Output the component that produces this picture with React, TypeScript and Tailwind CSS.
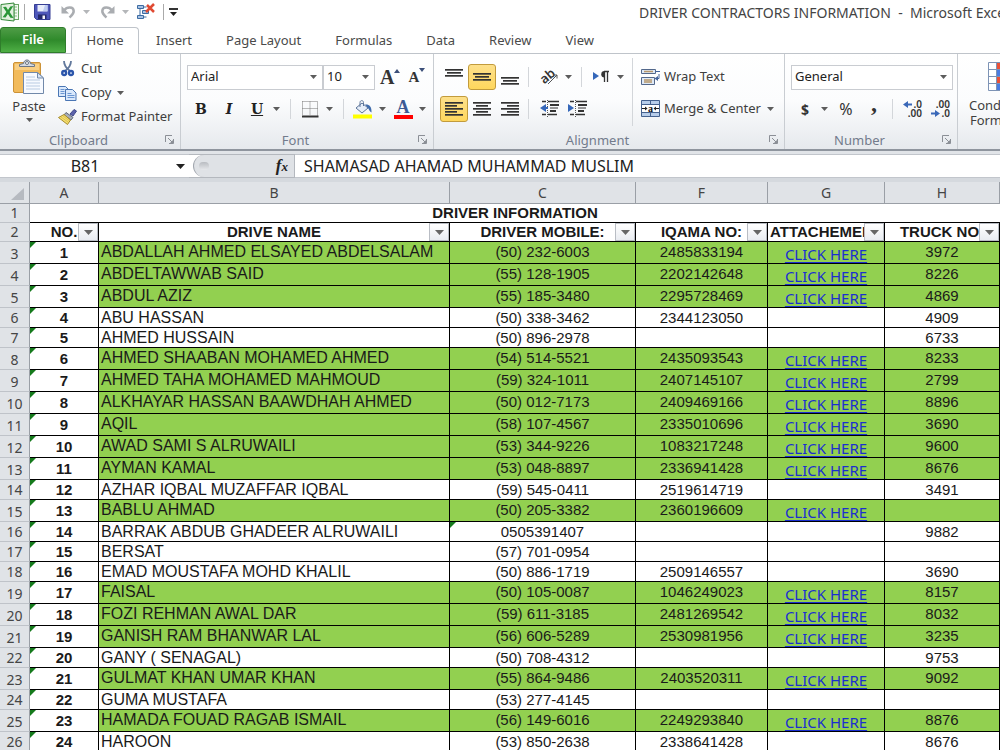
import type { ReactNode } from "react";

type Row = { name: string; mobile: string; iqama: string; truck: string; linked: boolean };

const rows: Row[] = [
  { name: "ABDALLAH AHMED ELSAYED ABDELSALAM", mobile: "(50) 232-6003", iqama: "2485833194", truck: "3972", linked: true },
  { name: "ABDELTAWWAB SAID", mobile: "(55) 128-1905", iqama: "2202142648", truck: "8226", linked: true },
  { name: "ABDUL AZIZ", mobile: "(55) 185-3480", iqama: "2295728469", truck: "4869", linked: true },
  { name: "ABU HASSAN", mobile: "(50) 338-3462", iqama: "2344123050", truck: "4909", linked: false },
  { name: "AHMED HUSSAIN", mobile: "(50) 896-2978", iqama: "", truck: "6733", linked: false },
  { name: "AHMED SHAABAN MOHAMED AHMED", mobile: "(54) 514-5521", iqama: "2435093543", truck: "8233", linked: true },
  { name: "AHMED TAHA MOHAMED MAHMOUD", mobile: "(59) 324-1011", iqama: "2407145107", truck: "2799", linked: true },
  { name: "ALKHAYAR HASSAN BAAWDHAH AHMED", mobile: "(50) 012-7173", iqama: "2409469166", truck: "8896", linked: true },
  { name: "AQIL", mobile: "(58) 107-4567", iqama: "2335010696", truck: "3690", linked: true },
  { name: "AWAD SAMI S ALRUWAILI", mobile: "(53) 344-9226", iqama: "1083217248", truck: "9600", linked: true },
  { name: "AYMAN KAMAL", mobile: "(53) 048-8897", iqama: "2336941428", truck: "8676", linked: true },
  { name: "AZHAR IQBAL MUZAFFAR IQBAL", mobile: "(59) 545-0411", iqama: "2519614719", truck: "3491", linked: false },
  { name: "BABLU AHMAD", mobile: "(50) 205-3382", iqama: "2360196609", truck: "", linked: true },
  { name: "BARRAK ABDUB GHADEER ALRUWAILI", mobile: "0505391407", iqama: "", truck: "9882", linked: false },
  { name: "BERSAT", mobile: "(57) 701-0954", iqama: "", truck: "", linked: false },
  { name: "EMAD MOUSTAFA MOHD KHALIL", mobile: "(50) 886-1719", iqama: "2509146557", truck: "3690", linked: false },
  { name: "FAISAL", mobile: "(50) 105-0087", iqama: "1046249023", truck: "8157", linked: true },
  { name: "FOZI REHMAN AWAL DAR", mobile: "(59) 611-3185", iqama: "2481269542", truck: "8032", linked: true },
  { name: "GANISH RAM BHANWAR LAL", mobile: "(56) 606-5289", iqama: "2530981956", truck: "3235", linked: true },
  { name: "GANY ( SENAGAL)", mobile: "(50) 708-4312", iqama: "", truck: "9753", linked: false },
  { name: "GULMAT KHAN UMAR KHAN", mobile: "(55) 864-9486", iqama: "2403520311", truck: "9092", linked: true },
  { name: "GUMA MUSTAFA", mobile: "(53) 277-4145", iqama: "", truck: "", linked: false },
  { name: "HAMADA FOUAD RAGAB ISMAIL", mobile: "(56) 149-6016", iqama: "2249293840", truck: "8876", linked: true },
  { name: "HAROON", mobile: "(53) 850-2638", iqama: "2338641428", truck: "8676", linked: false },
];

function Caret({ className = "text-[#5c5c5c]" }: { className?: string }) {
  return (
    <svg width="7" height="4" viewBox="0 0 7 4" className={`shrink-0 ${className}`} aria-hidden="true">
      <path d="M0 0h7L3.5 4z" fill="currentColor" />
    </svg>
  );
}

function CaretButton({ label }: { label: string }) {
  return (
    <button aria-label={label} className="flex h-[26px] w-[10px] items-center justify-center">
      <Caret />
    </button>
  );
}

function Tool({ label, active = false, children }: { label: string; active?: boolean; children: ReactNode }) {
  return (
    <button
      aria-label={label}
      className={
        active
          ? "flex h-[26px] w-7 shrink-0 items-center justify-center rounded-[3px] border border-[#c29b3c] bg-linear-to-b from-[#fde08a] to-[#ffd75c]"
          : "flex h-[26px] w-7 shrink-0 items-center justify-center"
      }
    >
      {children}
    </button>
  );
}

function Divider() {
  return <span className="h-5 w-px shrink-0 bg-[#d3d6da]" />;
}

function Group({ title, className, children }: { title: string; className: string; children: ReactNode }) {
  return (
    <section aria-label={title} className={`flex shrink-0 flex-col border-r border-[#c9cdd2] ${className}`}>
      <div className="flex-1">{children}</div>
      <div className="flex h-[19px] items-center pr-[6px] text-[13px] leading-[18px] text-[#737b8c]">
        <span className="flex-1 pr-2 text-center">{title}</span>
        <button aria-label={`${title} settings`}>
          <svg width="9" height="9" viewBox="0 0 9 9" fill="none" stroke="#8b8f96" aria-hidden="true">
            <path d="M.5 7V.5H7M3 3l4 4M8.500 4v4.500H4" />
            <path d="M8 5v3H5z" fill="#8b8f96" stroke="none" />
          </svg>
        </button>
      </div>
    </section>
  );
}

function Dropdown({ label, value, className }: { label: string; value: string; className: string }) {
  return (
    <div className={`relative shrink-0 ${className}`}>
      <select aria-label={label} defaultValue={value} className="h-[25px] w-full appearance-none border border-[#c9ccd1] bg-white pl-[3px] text-[13px] text-[#222]">
        <option>{value}</option>
      </select>
      <Caret className="pointer-events-none absolute top-[10px] right-[6px] text-[#5c5c5c]" />
    </div>
  );
}

function Lines({ y, spans }: { y: number; spans: [number, number][] }) {
  return (
    <svg width="18" height="20" viewBox="0 0 18 20" aria-hidden="true">
      {spans.map(([x, w], i) => (
        <rect key={i} x={x} y={y + i * 3} width={w} height="1.700" fill="#333" />
      ))}
    </svg>
  );
}

function ExcelLogo() {
  return (
    <svg width="20" height="20" viewBox="0 0 20 20" aria-hidden="true">
      <rect x="7" y="2.500" width="11.500" height="15" fill="#f4faf2" stroke="#6aa565" />
      <path d="M11 5h6M11 8h6M11 11h6M11 14h6M14 3v14" stroke="#8cba86" />
      <path d="M1 2.500 14 1v18L1 17.500z" fill="#e3f1df" stroke="#35893a" />
      <path d="m3 5 3-.3 2 3.300 2.300-3.600 3-.3-3.700 6 4 6-3.200-.3-2.500-3.800-2.300 3.500-3-.3 3.800-5.200z" fill="#2b9638" />
    </svg>
  );
}

function SaveIcon() {
  return (
    <svg width="17" height="16" viewBox="0 0 17 16" aria-hidden="true">
      <path d="M.5.5h15.500v15H2.500l-2-2z" fill="#4e57ba" stroke="#353d94" />
      <path d="M3.500 1h10v6.500h-10z" fill="#e8edfa" />
      <path d="M11 1h2.500v6H9z" fill="#bccaf0" />
      <path d="M4 10.500h8.500V15H4z" fill="#23296a" />
      <path d="M8.500 11.500h2.500V15H8.500z" fill="#f4f5fb" />
    </svg>
  );
}

function UndoIcon({ flip = false }: { flip?: boolean }) {
  return (
    <svg width="15" height="14" viewBox="0 0 15 14" fill="none" className={flip ? "-scale-x-100" : ""} aria-hidden="true">
      <path d="M3 5.500C6 1.500 12.500 1.500 12.700 6c.1 3-2 4.500-4.200 6.500" stroke="#aaadb1" strokeWidth="2.500" />
      <path d="M.5 1v7.500H8z" fill="#aaadb1" />
    </svg>
  );
}

function DeleteRowsIcon() {
  return (
    <svg width="20" height="18" viewBox="0 0 20 18" aria-hidden="true">
      <g fill="#a9c3e4" stroke="#3d6ca3">
        <path d="M1.500 2.500h6v3h-6zM6.500 7.500h6v3h-6zM1.500 12.500h6v3h-6z" />
      </g>
      <path d="M4 5.500v7M7.500 4h3M7.500 14h3" stroke="#3d6ca3" />
      <path d="m11 2 7 7m0-8-8 8" stroke="#e04a32" strokeWidth="2.500" />
    </svg>
  );
}

function PasteIcon() {
  return (
    <svg width="34" height="36" viewBox="0 0 34 36" aria-hidden="true">
      <rect x="1.500" y="3.500" width="27" height="30" rx="1.500" fill="#f2bb5c" stroke="#cc9237" />
      <path d="M3 5h24v6H3z" fill="#f8cf84" />
      <path d="M7.500 7.500V5.500l4-1C12-.2 18-.2 18.500 4.500l4 1v2z" fill="#d4dae2" stroke="#6c7684" />
      <circle cx="15" cy="4" r="1.500" fill="#fff" stroke="#6c7684" />
      <path d="M11.500 13.500h14l6 5.500v15.500h-20z" fill="#f7faff" stroke="#7189aa" />
      <path d="M25.500 13.500V19h6z" fill="#dae6f5" stroke="#7189aa" />
      <path d="M14 18h9M14 21h14M14 24h14M14 27h14M14 30h14" stroke="#b9cbe2" />
    </svg>
  );
}

function ScissorsIcon() {
  return (
    <svg width="14" height="16" viewBox="0 0 14 16" fill="none" aria-hidden="true">
      <path d="M3 0c0 4 2 7 6 10M10 0c0 4-2 7-6 10" stroke="#61789c" strokeWidth="1.800" />
      <circle cx="3.200" cy="12" r="2" stroke="#2b55ab" strokeWidth="2.300" />
      <circle cx="10" cy="12" r="2" stroke="#2b55ab" strokeWidth="2.300" />
    </svg>
  );
}

function CopyIcon() {
  return (
    <svg width="19" height="15" viewBox="0 0 19 15" aria-hidden="true">
      <g fill="#d9e8fb" stroke="#4a76b4">
        <path d="M.5.5h7l3 3v7H.5z" />
        <path d="M7.500 3.500h7l3.500 3.500v7.500H7.500z" />
      </g>
      <path d="M2.500 3.500h4M2.500 5.500h4M2.500 7.500h4M9.500 7.500h4M9.500 9.500h7M9.500 11.500h7" stroke="#6c97d2" />
    </svg>
  );
}

function PainterIcon() {
  return (
    <svg width="19" height="16" viewBox="0 0 19 16" aria-hidden="true">
      <path d="m12 5 4-4.500 2.500 1.500L15 7z" fill="#5b62ab" stroke="#3f4789" />
      <path d="m8 3.500 7 5-2 2.500-7-5z" fill="#a7adb9" stroke="#5f6879" />
      <path d="M6 5.500 .5 8.500l9 7 3-4.500z" fill="#f5df6e" stroke="#a58a2b" />
      <path d="m3 8 7 5M5 7l6 4.500" stroke="#dcc052" />
    </svg>
  );
}

function BordersIcon() {
  return (
    <svg width="17" height="17" viewBox="0 0 17 17" fill="none" aria-hidden="true">
      <path d="M.5.5h15v14M.5.5v14M8 .5v14M.5 7.500h15" stroke="#777" strokeDasharray="1 1" />
      <path d="M0 15.500h16.500" stroke="#333" strokeWidth="2" />
    </svg>
  );
}

function BucketIcon() {
  return (
    <svg width="20" height="19" viewBox="0 0 20 19" aria-hidden="true">
      <path d="m3 8 6-5 6 5-6 5z" fill="#e6eef9" stroke="#5d7599" />
      <path d="M7 7V2.500C7 0 10.500 0 10.500 2.500V6" fill="none" stroke="#5d7599" />
      <path d="M12 4.500c4-.5 7 2 6.500 8-1.500-.5-2.500-3-3.500-4.500z" fill="#416dac" />
      <path d="M0 14.500h19V18.500H0z" fill="#ffff00" />
    </svg>
  );
}

function OrientationIcon() {
  return (
    <svg width="19" height="18" viewBox="0 0 19 18" aria-hidden="true">
      <text x="0" y="13" transform="rotate(-40 7 9)" fontSize="13" fontWeight="600" fontFamily="Noto Sans, sans-serif" fill="#333">ab</text>
      <path d="m8 16 9-9M13.500 7H17v3.500" fill="none" stroke="#555" />
    </svg>
  );
}

function IndentIcon({ increase = false }: { increase?: boolean }) {
  return (
    <svg width="20" height="18" viewBox="0 0 20 18" aria-hidden="true">
      <path d="M2 1.500h4m2 0h11M2 14.500h4m2 0h9" stroke="#333" strokeWidth="1.500" />
      <path d="M10 5h9M10 11h6" stroke="#333" strokeWidth="2" />
      <path d="M10 8h8" stroke="#333" />
      <path d="M7.500 0v18" stroke="#555" strokeDasharray="1 1" />
      {increase ? <path d="M0 4v8l6-4z" fill="#3567b9" /> : <path d="M6 4v3h2v2H6v3L0 8z" fill="#3567b9" />}
    </svg>
  );
}

function WrapIcon() {
  return (
    <svg width="20" height="18" viewBox="0 0 20 18" fill="none" aria-hidden="true">
      <path d="M.5 1.500h14v4H.5zM.5 9.500h13v7H.5z" fill="#dfe9f6" stroke="#53688b" />
      <path d="M3 3.500h9M3 12h8M3 14h8" stroke="#b6966a" strokeWidth="1.500" />
      <path d="M14.500 3.500H19M18 6v4.500h-3" stroke="#43639c" />
      <path d="M17 8v5l-3.500-2.500z" fill="#43639c" />
    </svg>
  );
}

function MergeIcon() {
  return (
    <svg width="20" height="18" viewBox="0 0 20 18" fill="none" aria-hidden="true">
      <path d="M.5.5h18v16H.5z" fill="#b7cdea" stroke="#45628f" />
      <path d="M1 4.500h18M1 12.500h18M9.500 1v3M9.500 13v3" stroke="#45628f" />
      <path d="M1 5h17v7H1z" fill="#fff" />
      <path d="M1 8.500h5M13 8.500h5" stroke="#222" />
      <path d="M6.500 8.500 4 6.500v4zM12.500 8.500l2.500-2v4z" fill="#222" />
      <text x="7" y="12" fontSize="10" fontWeight="700" fontFamily="Liberation Serif, serif" fill="#111">a</text>
    </svg>
  );
}

function DecimalIcon({ decrease = false }: { decrease?: boolean }) {
  return (
    <svg width="20" height="18" viewBox="0 0 20 18" aria-hidden="true">
      <g fontSize="10" fontWeight="600" fontFamily="Noto Sans, sans-serif" fill="#333" textAnchor="end">
        <text x="19" y="8">{decrease ? ".00" : ".0"}</text>
        <text x="19" y="17">{decrease ? ".0" : ".00"}</text>
      </g>
      {decrease ? (
        <path d="M0 12.500h4V10l5 3.500L4 17v-2.500H0z" fill="#3a68b8" />
      ) : (
        <path d="M9 3.500H5V1L0 4.500 5 8V5.500h4z" fill="#3a68b8" />
      )}
    </svg>
  );
}

function ConditionalIcon() {
  return (
    <svg width="32" height="29" viewBox="0 0 32 29" aria-hidden="true">
      <path d="M.5.5h31v28H.5z" fill="#fff" />
      <path d="M9 0h11v7H9zM9 14h14v7H9z" fill="#ea5138" />
      <path d="M9 7h8v7H9zM9 21h11v7H9z" fill="#4b7ce0" />
      <path d="M.5.5h31v28H.5zM0 7.500h32M0 14.500h32M0 21.500h32M8.500 0v29M24.500 0v29" fill="none" stroke="#7d93b5" />
    </svg>
  );
}

function TitleBar() {
  return (
    <header className="flex h-[27px] shrink-0 items-start overflow-hidden bg-white">
      <div className="flex h-[23px] shrink-0 items-center">
        <ExcelLogo />
        <span className="ml-[4px] h-4 w-px bg-[#aaa]" />
        <button aria-label="Save" className="ml-[9px]"><SaveIcon /></button>
        <button aria-label="Undo" className="ml-[10px]"><UndoIcon /></button>
        <button aria-label="Undo history" className="ml-[7px]"><Caret className="text-[#b4b6b9]" /></button>
        <button aria-label="Redo" className="ml-[10px]"><UndoIcon flip /></button>
        <button aria-label="Redo history" className="ml-[7px]"><Caret className="text-[#b4b6b9]" /></button>
        <button aria-label="Delete sheet rows" className="ml-[7px]"><DeleteRowsIcon /></button>
        <span className="ml-[7px] h-4 w-px bg-[#aaa]" />
        <button aria-label="Customize toolbar" className="ml-[5px] flex flex-col items-center gap-[2px]">
          <span className="h-[2px] w-[9px] bg-[#333]" />
          <Caret className="text-[#222]" />
        </button>
      </div>
      <h1 className="ml-auto w-[361px] shrink-0 overflow-hidden pt-[3px] text-[14px] leading-[20px] whitespace-pre text-[#444]">
        {"DRIVER CONTRACTORS INFORMATION  -  Microsoft Excel"}
      </h1>
    </header>
  );
}

function Tabs() {
  const tabs = ["Insert", "Page Layout", "Formulas", "Data", "Review", "View"];
  return (
    <nav className="flex h-[27px] shrink-0 items-stretch border-b border-[#bfc4ca] text-[13px] text-[#4a4a4a]">
      <button className="w-[66px] rounded-t-[3px] border border-[#2f7d2b] bg-linear-to-b from-[#4e9c46] via-[#2f8a2b] to-[#4eaf45] font-semibold text-white">File</button>
      <button className="-mb-px ml-[5px] w-[68px] rounded-t-[4px] border border-b-0 border-[#bfc4ca] bg-white">Home</button>
      <div className="flex items-center gap-[34px] pt-px pl-[17px]">
        {tabs.map((tab) => (
          <button key={tab}>{tab}</button>
        ))}
      </div>
    </nav>
  );
}

function Ribbon() {
  return (
    <div className="flex h-[97px] shrink-0 overflow-hidden border-b-2 border-[#8f959e] bg-linear-to-b from-white via-[#fbfcfd] to-[#e6e9ed] text-[13px] text-[#3f3f3f]">
      <Group title="Clipboard" className="w-[181px]">
        <div className="flex pt-[3px]">
          <button className="ml-[6px] flex w-[46px] flex-col items-center pt-[2px]">
            <PasteIcon />
            <span className="mt-[2px] leading-[18px]">Paste</span>
            <Caret className="mt-[3px] text-[#5c5c5c]" />
          </button>
          <div className="ml-[6px] flex flex-col">
            <button className="flex h-6 items-center"><span className="flex w-[23px] pl-[3px]"><ScissorsIcon /></span>Cut</button>
            <button className="flex h-6 items-center"><span className="flex w-[23px]"><CopyIcon /></span>Copy<Caret className="ml-[6px] text-[#5c5c5c]" /></button>
            <button className="flex h-6 items-center whitespace-nowrap"><span className="flex w-[23px]"><PainterIcon /></span>Format Painter</button>
          </div>
        </div>
      </Group>

      <Group title="Font" className="w-[253px]">
        <div className="flex flex-col gap-[6px] pt-[10px] pl-[6px]">
          <div className="flex h-[26px] items-center">
            <Dropdown label="Font name" value="Arial" className="w-[136px]" />
            <Dropdown label="Font size" value="10" className="w-[52px]" />
            <button aria-label="Grow font" className="ml-[5px] flex font-['Liberation_Serif',serif] text-[20px] leading-[26px] font-bold text-[#333]">
              A<svg width="6" height="4" viewBox="0 0 6 4" className="mt-[5px]" aria-hidden="true"><path d="M0 4h6L3 0z" fill="#3c4f79" /></svg>
            </button>
            <button aria-label="Shrink font" className="ml-[8px] flex font-['Liberation_Serif',serif] text-[15px] leading-[28px] font-bold text-[#333]">
              A<svg width="6" height="4" viewBox="0 0 6 4" className="mt-[5px]" aria-hidden="true"><path d="M0 0h6L3 4z" fill="#3c4f79" /></svg>
            </button>
          </div>
          <div className="flex h-[26px] items-center font-['DejaVu_Serif',serif] text-[14px] font-bold text-[#222]">
            <Tool label="Bold">B</Tool>
            <Tool label="Italic"><i>I</i></Tool>
            <Tool label="Underline"><u>U</u></Tool>
            <CaretButton label="Underline styles" />
            <span className="w-[9px]" />
            <Divider />
            <span className="w-[5px]" />
            <Tool label="Borders"><BordersIcon /></Tool>
            <CaretButton label="Border styles" />
            <span className="w-[9px]" />
            <Divider />
            <span className="w-[5px]" />
            <Tool label="Fill color"><BucketIcon /></Tool>
            <CaretButton label="Fill colors" />
            <span className="w-[2px]" />
            <button aria-label="Font color" className="flex w-7 flex-col items-center font-['Liberation_Serif',serif] text-[18px] leading-[15px] text-[#3c5a94]">
              A<span className="h-[4px] w-[19px] bg-[#ff0000]" />
            </button>
            <CaretButton label="Font colors" />
          </div>
        </div>
      </Group>

      <Group title="Alignment" className="w-[351px]">
        <div className="flex">
          <div className="flex w-[198px] flex-col gap-[6px] pt-[10px] pl-[6px]">
            <div className="flex h-[26px] items-center">
              <Tool label="Top align"><Lines y={2} spans={[[0, 18], [2, 14], [0, 18]]} /></Tool>
              <Tool label="Middle align" active><Lines y={6} spans={[[0, 18], [2, 14], [0, 18]]} /></Tool>
              <Tool label="Bottom align"><Lines y={10} spans={[[0, 18], [2, 14], [0, 18]]} /></Tool>
              <span className="w-[4px]" />
              <Divider />
              <span className="w-[6px]" />
              <Tool label="Orientation"><OrientationIcon /></Tool>
              <CaretButton label="Orientation options" />
              <span className="w-[8px]" />
              <Divider />
              <span className="w-[5px]" />
              <Tool label="Text direction">
                <svg width="17" height="14" viewBox="0 0 17 14" aria-hidden="true">
                  <path d="M0 2v8l6-4z" fill="#3567b9" />
                  <path d="M11 1.500h5M11.500 1v11M14.500 1v11" stroke="#333" strokeWidth="1.300" />
                  <path d="M11.500 1a3 3 0 0 0 0 6.500z" fill="#333" />
                </svg>
              </Tool>
              <CaretButton label="Text direction options" />
            </div>
            <div className="flex h-[26px] items-center">
              <Tool label="Align left" active><Lines y={3} spans={[[0, 18], [0, 12], [0, 18], [0, 12], [0, 18]]} /></Tool>
              <Tool label="Center"><Lines y={3} spans={[[0, 18], [3, 12], [0, 18], [3, 12], [0, 18]]} /></Tool>
              <Tool label="Align right"><Lines y={3} spans={[[0, 18], [6, 12], [0, 18], [6, 12], [0, 18]]} /></Tool>
              <span className="w-[4px]" />
              <Divider />
              <span className="w-[7px]" />
              <Tool label="Decrease indent"><IndentIcon /></Tool>
              <Tool label="Increase indent"><IndentIcon increase /></Tool>
            </div>
          </div>
          <span className="mt-[4px] h-[68px] w-px shrink-0 bg-[#d3d6da]" />
          <div className="flex flex-col gap-[6px] pt-[10px] pl-[8px] whitespace-nowrap">
            <button className="flex h-[26px] items-center gap-[3px]"><WrapIcon />Wrap Text</button>
            <button className="flex h-[26px] items-center gap-[3px]"><MergeIcon />Merge &amp; Center<Caret className="ml-[3px] text-[#5c5c5c]" /></button>
          </div>
        </div>
      </Group>

      <Group title="Number" className="w-[173px]">
        <div className="flex flex-col gap-[6px] pt-[10px] pl-[6px]">
          <div className="flex h-[26px] items-center"><Dropdown label="Number format" value="General" className="w-[162px]" /></div>
          <div className="flex h-[26px] items-center text-[#333]">
            <Tool label="Currency"><b className="text-[14px]">$</b></Tool>
            <CaretButton label="Currency options" />
            <span className="w-[3px]" />
            <Tool label="Percent"><span className="text-[16px]">%</span></Tool>
            <Tool label="Comma style"><b className="pb-[11px] font-['Liberation_Serif',serif] text-[24px] leading-[15px]">,</b></Tool>
            <span className="w-[4px]" />
            <Divider />
            <span className="w-[6px]" />
            <Tool label="Increase decimal"><DecimalIcon /></Tool>
            <Tool label="Decrease decimal"><DecimalIcon decrease /></Tool>
          </div>
        </div>
      </Group>

      <button className="ml-[6px] flex w-[80px] shrink-0 flex-col items-center pt-[8px] leading-[15px]">
        <ConditionalIcon />
        <span className="mt-[7px]">Conditional</span>
        <span>Formatting</span>
      </button>
    </div>
  );
}

function FormulaBar() {
  return (
    <div className="flex h-[31px] shrink-0 items-stretch border-t-3 border-b-4 border-t-[#e1e4e8] border-b-[#d5d9de] bg-[#dfe2e6] text-[16px] text-[#222]">
      <div className="flex w-[189px] shrink-0 items-center border-y border-[#c2c6cc] bg-white">
        <input aria-label="Name box" defaultValue="B81" className="h-[22px] w-[170px] bg-transparent text-center" />
        <button aria-label="Named ranges" className="ml-[6px] flex"><svg width="9" height="5" viewBox="0 0 9 5" aria-hidden="true"><path d="M0 0h9L4.500 5z" fill="#222" /></svg></button>
      </div>
      <div className="flex w-[106px] shrink-0 items-stretch border-y border-r border-[#b4b8be] bg-white">
        <div className="ml-[4px] flex flex-1 items-center rounded-l-full border-l border-[#a0a5ad] bg-[#dfe2e6]">
          <span className="ml-[5px] h-[8px] w-[10px] rounded-full bg-linear-to-b from-[#b9bcc1] to-[#e6e8eb]" />
          <button aria-label="Insert function" className="mr-[6px] ml-auto font-['Liberation_Serif',serif] text-[17px] leading-[20px] font-bold italic">
            f<span className="text-[13px]">x</span>
          </button>
        </div>
      </div>
      <input aria-label="Formula" defaultValue="SHAMASAD AHAMAD MUHAMMAD MUSLIM" className="min-w-0 flex-1 border-y border-[#c2c6cc] bg-white pl-[9px]" />
    </div>
  );
}

const columns = ["A", "B", "C", "F", "G", "H"];
const headings = ["NO.", "DRIVE NAME", "DRIVER MOBILE:", "IQAMA NO:", "ATTACHEMENT", "TRUCK NO:"];

const rowHead = "border-r border-b border-r-[#9a9fa6] border-b-[#bfc3c9] bg-[#e0e3e7] p-0 text-center align-bottom font-['Noto_Sans',sans-serif] text-[14px] leading-[18px] font-normal text-[#454545]";

function ErrorMark() {
  return <span className="absolute top-0 left-0 size-[6px] bg-[#157a1c] [clip-path:polygon(0_0,100%_0,0_100%)]" />;
}

function Sheet() {
  return (
    <main className="min-h-0 flex-1 overflow-hidden">
      <table className="w-full table-fixed border-separate border-spacing-0 font-['Liberation_Sans',Arial,sans-serif] text-[15px] leading-[18px] whitespace-nowrap text-[#1a1a1a]">
        <colgroup>
          <col className="w-[30px]" />
          <col className="w-[69px]" />
          <col className="w-[351px]" />
          <col className="w-[186px]" />
          <col className="w-[132px]" />
          <col className="w-[117px]" />
          <col />
        </colgroup>
        <thead>
          <tr className="h-[22px]">
            <th className="border-r border-b border-[#9a9fa6] bg-[#e0e3e7] p-0 align-bottom">
              <svg width="13" height="12" viewBox="0 0 13 12" className="mb-[3px] ml-[11px]" aria-hidden="true"><path d="M13 0v12H0z" fill="#b6bac0" /></svg>
            </th>
            {columns.map((c) => (
              <th key={c} className="border-r border-b border-[#9a9fa6] bg-[#e0e3e7] p-0 font-['Noto_Sans',sans-serif] text-[14px] font-normal text-[#454545]">{c}</th>
            ))}
          </tr>
        </thead>
        <tbody>
          <tr className="h-[19px]">
            <th scope="row" className={rowHead}>1</th>
            <th colSpan={6} className="border-b border-black bg-white p-0">DRIVER INFORMATION</th>
          </tr>
          <tr className="h-[19px]">
            <th scope="row" className={rowHead}>2</th>
            {headings.map((h) => (
              <th key={h} className="relative overflow-hidden border-r border-b border-black bg-white p-0 text-center">
                {h}
                <button aria-label={`Filter ${h}`} className="absolute right-0 bottom-0 flex h-[18px] w-[20px] items-center justify-center border border-[#b9bdc4] bg-linear-to-b from-white to-[#e9ecf1]">
                  <svg width="9" height="5" viewBox="0 0 9 5" aria-hidden="true"><path d="M0 0h9L4.500 5z" fill="#666" /></svg>
                </button>
              </th>
            ))}
          </tr>
          {rows.map((r, i) => {
            const cell = r.linked
              ? "relative border-r border-b border-black bg-[#92d050] p-0 pb-[2px] text-center"
              : "relative border-r border-b border-black bg-white p-0 text-center";
            return (
              <tr key={r.name} className={r.linked ? "h-[22px]" : "h-[20px]"}>
                <th scope="row" className={rowHead}>{i + 3}</th>
                <td className="relative border-r border-b border-black bg-white p-0 text-center font-bold"><ErrorMark />{i + 1}</td>
                <td className={`${cell} pl-[2px] text-left! text-[16px]`}>{r.name}</td>
                <td className={cell}>{r.mobile.startsWith("(") ? null : <ErrorMark />}{r.mobile}</td>
                <td className={cell}>{r.iqama}</td>
                <td className={r.linked ? "border-r border-b border-black bg-[#92d050] p-0 text-center align-bottom" : cell}>
                  {r.linked && <a href="#attachment" className="block font-['Noto_Sans',sans-serif] text-[15px] leading-[18px] text-[#1a2fd0] underline underline-offset-2">CLICK HERE</a>}
                </td>
                <td className={cell}>{r.truck}</td>
              </tr>
            );
          })}
        </tbody>
      </table>
    </main>
  );
}

export default function App() {
  return (
    <div className="flex h-screen flex-col overflow-hidden bg-white font-['Noto_Sans','Open_Sans',sans-serif]">
      <TitleBar />
      <Tabs />
      <Ribbon />
      <FormulaBar />
      <Sheet />
    </div>
  );
}
